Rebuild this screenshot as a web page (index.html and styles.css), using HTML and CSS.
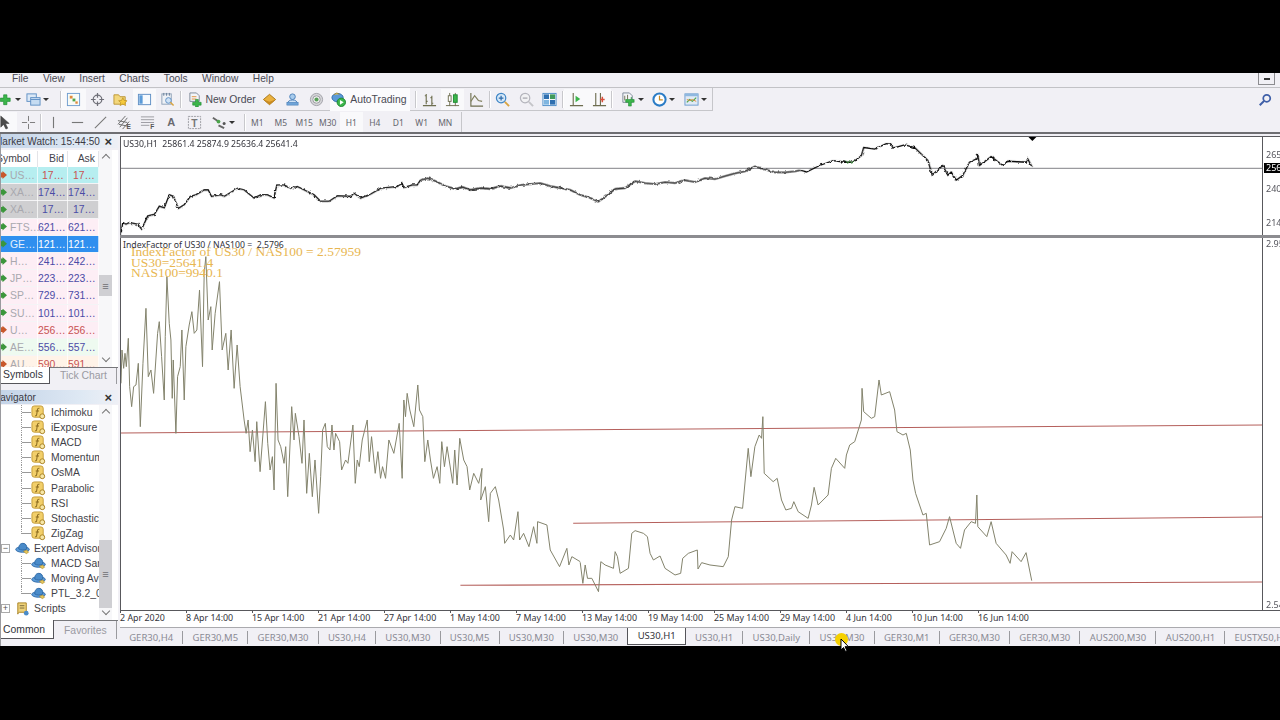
FILE: index.html
```html
<!DOCTYPE html>
<html lang="en">
<head>
<meta charset="utf-8">
<title>MetaTrader</title>
<link rel="stylesheet" href="styles.css">
</head>
<body>
<svg class="defs" width="0" height="0" aria-hidden="true">
  <filter id="jag-top" x="-2%" y="-10%" width="104%" height="120%">
    <feTurbulence type="fractalNoise" baseFrequency=".3" numOctaves="2" seed="9"/>
    <feDisplacementMap in="SourceGraphic" scale="3" xChannelSelector="R" yChannelSelector="G"/>
  </filter>
  <symbol id="i-f" viewBox="0 0 16 16">
    <rect x="1" y="1" width="12" height="12" rx="2.5" fill="#f2cf6a" stroke="#c39a36"/>
    <path d="M9 3.5C7.5 3 7 4 6.8 5.5L6 10.5C5.8 11.5 5 11.5 4.5 11.2M5 6.5h3.5" fill="none" stroke="#8a6a20" stroke-width="1.1"/>
    <circle cx="12" cy="12" r="2.6" fill="#f6e6a8" stroke="#a8801e"/>
  </symbol>
  <symbol id="i-hat" viewBox="0 0 16 16">
    <ellipse cx="8" cy="9" rx="7.2" ry="3" fill="#5b9bd8" stroke="#2f6aa8"/>
    <path d="M4 8.5C4 4 6 2.5 8.5 2.5S13 4.5 12.5 8.5C10 10 6.500 10 4 8.500Z" fill="#4a8bc9" stroke="#2f6aa8"/>
    <path d="M9 11l3 2.500 2.500-1.500-2-2.500Z" fill="#e6c65a" stroke="#a8801e" stroke-width=".6"/>
  </symbol>
  <symbol id="i-cross" viewBox="0 0 16 16">
    <circle cx="8" cy="8" r="4.600" fill="none" stroke="#6f6f78" stroke-width="1.300"/>
    <path d="M8 1v5M8 10v5M1 8h5M10 8h5" stroke="#6f6f78" stroke-width="1.300"/>
  </symbol>
  <symbol id="i-plus" viewBox="0 0 16 16">
    <path d="M6 3h3.500v3.500H13V10H9.500v3.500H6V10H2.500V6.500H6Z" fill="#3bb54a" stroke="#1f8a33" stroke-width=".7"/>
  </symbol>
</svg>

<div class="app">
  <nav class="menubar">
    <span class="menu-item">File</span>
    <span class="menu-item">View</span>
    <span class="menu-item">Insert</span>
    <span class="menu-item">Charts</span>
    <span class="menu-item">Tools</span>
    <span class="menu-item">Window</span>
    <span class="menu-item">Help</span>
    <span class="min-btn"><i></i></span>
  </nav>

  <div class="toolbar toolbar-main">
    <div class="tb-group">
      <span class="tb sm shift-in"><svg class="ico"><use href="#i-plus"/></svg></span><span class="caret"></span>
      <span class="tb sm ml2"><svg class="ico" viewBox="0 0 16 16"><rect x="1" y="2" width="10" height="8" fill="#dbe8f6" stroke="#5f8fc4"/><rect x="5" y="6" width="10" height="8" fill="#c6dcf2" stroke="#5f8fc4"/><path d="M5 8h10" stroke="#5f8fc4"/></svg></span><span class="caret"></span>
      <span class="sep ml10"></span>
      <span class="tb on"><svg class="ico" viewBox="0 0 16 16"><rect x="1.500" y="1.500" width="13" height="13" fill="#f8fbf6" stroke="#6e9ccf"/><rect x="4" y="4" width="3" height="3" fill="#e08a3c"/><rect x="7" y="7" width="3" height="3" fill="#4ca64c"/><rect x="10" y="10" width="2.500" height="2.500" fill="#e08a3c"/></svg></span>
      <span class="tb"><svg class="ico"><use href="#i-cross"/></svg></span>
      <span class="tb"><svg class="ico" viewBox="0 0 16 16"><path d="M1 3h5l1.500 2H13v8H1Z" fill="#f3d77c" stroke="#bd9638"/><path d="M10.500 6l1.400 3 3.100.3-2.300 2.100.7 3.100-2.900-1.700-2.900 1.700.7-3.100L6 9.300 9.100 9Z" fill="#f5c93c" stroke="#b98b1c" stroke-width=".7"/></svg></span>
      <span class="tb on"><svg class="ico" viewBox="0 0 16 16"><rect x="1.500" y="2.500" width="13" height="11" fill="#f6fafe" stroke="#5f8fc4"/><rect x="2.500" y="3.500" width="3.500" height="9" fill="#5b9bd8"/></svg></span>
      <span class="tb"><svg class="ico" viewBox="0 0 16 16"><rect x="2" y="2" width="10" height="11" fill="#eef1f6" stroke="#8fa1b8"/><path d="M4 1v3M7 1v3M10 1v3" stroke="#6a7f9a"/><circle cx="9" cy="9" r="3" fill="#cfe2f5" stroke="#5f8fc4"/><path d="M11 11l3.500 3.500" stroke="#d9a441" stroke-width="1.600"/></svg></span>
      <span class="sep"></span>
      <span class="tb tb-text"><svg class="ico" viewBox="0 0 16 16"><path d="M2 1h7l3 3v6H2Z" fill="#f3f5f8" stroke="#7d8797"/><path d="M4 5h5M4 7.500h5" stroke="#e0913c"/><path d="M8 8h3v3h3v3h-3v2H8v-2H5v-3h3Z" fill="#3bb54a" stroke="#1f8a33" stroke-width=".6"/></svg>New Order</span>
      <span class="tb"><svg class="ico" viewBox="0 0 16 16"><path d="M8 2.500l6.500 5.500L8 13.500 1.500 8Z" fill="#eab13f" stroke="#a8771c"/><path d="M1.500 8L8 13.500 14.500 8 8 10.500Z" fill="#c98a22"/></svg></span>
      <span class="tb"><svg class="ico" viewBox="0 0 16 16"><circle cx="8" cy="5" r="3" fill="#a8cbec" stroke="#4a7fb8"/><path d="M2.500 13c0-3 2.500-4.500 5.500-4.500s5.500 1.500 5.500 4.500Z" fill="#cfe2f5" stroke="#4a7fb8"/><rect x="2" y="11" width="12" height="3" fill="#6fa4d8" stroke="#4a7fb8" stroke-width=".6"/></svg></span>
      <span class="tb"><svg class="ico" viewBox="0 0 16 16"><circle cx="8" cy="8" r="6.500" fill="#d6d6da" stroke="#a0a0a8"/><circle cx="8" cy="8" r="4" fill="#eee" stroke="#9a9aa0"/><circle cx="8" cy="8" r="2.200" fill="#58a058"/></svg></span>
      <span class="tb tb-text tb-auto"><svg class="ico" viewBox="0 0 16 16"><ellipse cx="7" cy="6" rx="6" ry="4.500" fill="#5b9bd8" stroke="#2f6aa8"/><path d="M3 3l3-2 3 1.500" fill="#e6c65a" stroke="#a8801e" stroke-width=".7"/><circle cx="11" cy="11" r="4.500" fill="#3bb54a" stroke="#1f8a33"/><path d="M9.500 8.500l4 2.500-4 2.500Z" fill="#fff"/></svg>AutoTrading</span>
      <span class="sep ml5"></span>
      <span class="tb"><svg class="ico" viewBox="0 0 16 16"><path d="M4.500 2v11M3 4h1.500M4.500 10H6M10.500 4v10M9 6h1.500M10.500 12H12M1 14.500h14" fill="none" stroke="#6e6e50" stroke-width="1.200"/></svg></span>
      <span class="tb on"><svg class="ico" viewBox="0 0 16 16"><path d="M5 1v14M11 1v14" stroke="#6e6e50"/><rect x="3.500" y="4" width="3" height="6" fill="#fff" stroke="#6e6e50"/><rect x="9" y="3" width="4" height="8" fill="#3bb54a" stroke="#1f8a33"/><path d="M1 14.500h14" stroke="#6e6e50"/></svg></span>
      <span class="tb"><svg class="ico" viewBox="0 0 16 16"><path d="M2 1v14h13" fill="none" stroke="#6e6e50" stroke-width="1.200"/><path d="M2 10l4-6 4 5 4 1" fill="none" stroke="#80805f" stroke-width="1.200"/></svg></span>
      <span class="sep ml1"></span>
      <span class="tb"><svg class="ico" viewBox="0 0 16 16"><circle cx="6.500" cy="6.500" r="5" fill="#d6e8f8" stroke="#3f86c6" stroke-width="1.300"/><path d="M4 6.500h5M6.500 4v5" stroke="#2f6aa8" stroke-width="1.300"/><path d="M10.500 10.500l4.500 4.500" stroke="#d9a441" stroke-width="2"/></svg></span>
      <span class="tb"><svg class="ico" viewBox="0 0 16 16"><circle cx="6.500" cy="6.500" r="5" fill="#f2f2f4" stroke="#b4b4bc" stroke-width="1.300"/><path d="M4 6.500h5" stroke="#a4a4ac" stroke-width="1.300"/><path d="M10.500 10.500l4.500 4.500" stroke="#c4c4c8" stroke-width="2"/></svg></span>
      <span class="tb"><svg class="ico" viewBox="0 0 16 16"><rect x="1" y="1.500" width="14" height="13" fill="#fff" stroke="#4a8bc9"/><rect x="2" y="2.500" width="5.500" height="5" fill="#2f6fb0"/><rect x="8.500" y="2.500" width="5.500" height="5" fill="#3f9a5c"/><rect x="2" y="8.500" width="5.500" height="5" fill="#7fb5e0"/><rect x="8.500" y="8.500" width="5.500" height="5" fill="#2f6fb0"/></svg></span>
      <span class="sep ml1"></span>
      <span class="tb on"><svg class="ico" viewBox="0 0 16 16"><path d="M4.500 1v14M1 14.500h14" stroke="#6e6e50" stroke-width="1.200"/><path d="M7 4v7l5-3.500Z" fill="#3bb54a"/></svg></span>
      <span class="tb on"><svg class="ico" viewBox="0 0 16 16"><path d="M4 1v14M9 1v14M1 14.500h14" stroke="#6e6e50" stroke-width="1.200"/><path d="M11 5v6M8.500 8h5" stroke="#d8503c" stroke-width="1.600"/></svg></span>
      <span class="sep"></span>
      <span class="tb sm ml6"><svg class="ico" viewBox="0 0 16 16"><path d="M2 1h7l3 3v7H2Z" fill="#f3f5f8" stroke="#7d8797"/><path d="M4 4v5M7 3v5" stroke="#6e6e50"/><path d="M8 8h3V5.500h0V8h3v3h-3v4H8v-4H5V8Z" fill="#3bb54a" stroke="#1f8a33" stroke-width=".6"/></svg></span><span class="caret"></span>
      <span class="tb sm ml5"><svg class="ico" viewBox="0 0 16 16"><circle cx="8" cy="8" r="6.500" fill="#fff" stroke="#2b7cc6" stroke-width="2.200"/><path d="M8 4v4.500h3.500" fill="none" stroke="#c98a22" stroke-width="1.300"/></svg></span><span class="caret"></span>
      <span class="tb sm ml6"><svg class="ico" viewBox="0 0 16 16"><rect x="1" y="2" width="14" height="12" fill="#dfeaf6" stroke="#6e9ccf"/><rect x="1" y="2" width="14" height="2.500" fill="#8fb8e0"/><path d="M3 11l3-3 3 2 4-4" fill="none" stroke="#4ca64c" stroke-width="1.200"/><path d="M3 8l3 1 3-1 4 2" fill="none" stroke="#e08a3c"/></svg></span><span class="caret"></span>
    </div>
    <svg class="search" viewBox="0 0 16 16"><circle cx="10" cy="6" r="4" fill="none" stroke="#3f5fa8" stroke-width="2"/><path d="M7 9l-5 5" stroke="#3f5fa8" stroke-width="2.400"/></svg>
  </div>

  <div class="toolbar toolbar-draw">
    <div class="tb-group">
      <span class="tb on shift-out"><svg class="ico" viewBox="0 0 16 16"><path d="M4 1v12l3-3 2.500 5 2-1-2.500-5h4Z" fill="#4a4a4a" stroke="#333" stroke-width=".5"/></svg></span>
      <span class="tb"><svg class="ico" viewBox="0 0 16 16"><path d="M8 1v5.500M8 9.500V15M1 8h5.500M9.500 8H15" stroke="#777"/></svg></span>
      <span class="sep"></span>
      <span class="tb"><svg class="ico" viewBox="0 0 16 16"><path d="M8 2v12" stroke="#777" stroke-width="1.200"/></svg></span>
      <span class="tb"><svg class="ico" viewBox="0 0 16 16"><path d="M2 8h12" stroke="#777" stroke-width="1.200"/></svg></span>
      <span class="tb"><svg class="ico" viewBox="0 0 16 16"><path d="M2 14L14 2" stroke="#777" stroke-width="1.200"/></svg></span>
      <span class="tb"><svg class="ico" viewBox="0 0 16 16"><path d="M1 10L9 1M3 13l8-10M6 15l7-8M1 6l10 2M2 10l10 2" fill="none" stroke="#6a6a6a"/><text x="10" y="15" class="ico-letter">E</text></svg></span>
      <span class="tb"><svg class="ico" viewBox="0 0 16 16"><path d="M1 2h14M1 5h14M1 8h14M1 11h9" stroke="#9a9aa0"/><text x="11" y="15" class="ico-letter">F</text></svg></span>
      <span class="tb"><span class="glyph-a">A</span></span>
      <span class="tb"><svg class="ico" viewBox="0 0 16 16"><rect x="1.500" y="1.500" width="13" height="13" fill="none" stroke="#9a9aa0" stroke-dasharray="2 1"/><text x="4.500" y="12.500" class="ico-t">T</text></svg></span>
      <span class="tb sm ml3"><svg class="ico" viewBox="0 0 16 16"><path d="M2 3l6 4" stroke="#666" stroke-width="2"/><path d="M8 11l6 3" stroke="#666" stroke-width="2"/><circle cx="8" cy="7" r="2" fill="#4ca64c"/><circle cx="14" cy="9" r="1.600" fill="#555"/></svg></span><span class="caret"></span>
      <span class="sep ml8"></span>
      <span class="tb period">M1</span>
      <span class="tb period">M5</span>
      <span class="tb period">M15</span>
      <span class="tb period">M30</span>
      <span class="tb period on">H1</span>
      <span class="tb period">H4</span>
      <span class="tb period">D1</span>
      <span class="tb period">W1</span>
      <span class="tb period">MN</span>
    </div>
  </div>

  <main class="workspace">
    <aside class="side">
      <section class="panel market">
        <header class="panel-title"><span class="panel-name">Market Watch: 15:44:50</span><span class="close">×</span></header>
        <div class="panel-body">
          <div class="mw-table">
            <div class="mw-head"><span>Symbol</span><span>Bid</span><span>Ask</span></div>
            <div class="mw-row cyan red"><span class="sym">US…</span><span>17…</span><span>17…</span></div>
            <div class="mw-row grey"><span class="sym">XA…</span><span>174…</span><span>174…</span></div>
            <div class="mw-row grey"><span class="sym">XA…</span><span>17…</span><span>17…</span></div>
            <div class="mw-row pink"><span class="sym">FTS…</span><span>621…</span><span>621…</span></div>
            <div class="mw-row selected"><span class="sym">GE…</span><span>121…</span><span>121…</span></div>
            <div class="mw-row pink"><span class="sym">H…</span><span>241…</span><span>242…</span></div>
            <div class="mw-row pink"><span class="sym">JP…</span><span>223…</span><span>223…</span></div>
            <div class="mw-row pink"><span class="sym">SP…</span><span>729…</span><span>731…</span></div>
            <div class="mw-row pink"><span class="sym">SU…</span><span>101…</span><span>101…</span></div>
            <div class="mw-row pink red"><span class="sym">U…</span><span>256…</span><span>256…</span></div>
            <div class="mw-row mint"><span class="sym">AE…</span><span>556…</span><span>557…</span></div>
            <div class="mw-row peach red"><span class="sym">AU…</span><span>590…</span><span>591…</span></div>
          </div>
          <div class="scrollbar"><span class="sb-arrow up"></span><span class="thumb thumb-mw">≡</span><span class="sb-arrow down"></span></div>
        </div>
        <div class="panel-tabs"><span class="ptab active">Symbols</span><span class="ptab">Tick Chart</span></div>
      </section>

      <section class="panel navigator">
        <header class="panel-title"><span class="panel-name">Navigator</span><span class="close">×</span></header>
        <div class="panel-body">
          <div class="tree">
            <div class="node leaf"><svg class="ico"><use href="#i-f"/></svg>Ichimoku</div>
            <div class="node leaf"><svg class="ico"><use href="#i-f"/></svg>iExposure</div>
            <div class="node leaf"><svg class="ico"><use href="#i-f"/></svg>MACD</div>
            <div class="node leaf"><svg class="ico"><use href="#i-f"/></svg>Momentum</div>
            <div class="node leaf"><svg class="ico"><use href="#i-f"/></svg>OsMA</div>
            <div class="node leaf"><svg class="ico"><use href="#i-f"/></svg>Parabolic</div>
            <div class="node leaf"><svg class="ico"><use href="#i-f"/></svg>RSI</div>
            <div class="node leaf"><svg class="ico"><use href="#i-f"/></svg>Stochastic</div>
            <div class="node leaf last"><svg class="ico"><use href="#i-f"/></svg>ZigZag</div>
            <div class="node root"><span class="expander">−</span><svg class="ico"><use href="#i-hat"/></svg>Expert Advisors</div>
            <div class="node leaf"><svg class="ico"><use href="#i-hat"/></svg>MACD Sample</div>
            <div class="node leaf"><svg class="ico"><use href="#i-hat"/></svg>Moving Average</div>
            <div class="node leaf last"><svg class="ico"><use href="#i-hat"/></svg>PTL_3.2_03</div>
            <div class="node root"><span class="expander">+</span><svg class="ico" viewBox="0 0 16 16"><path d="M3 2h9v10H5c-1 0-2 1-2 2Z" fill="#eed27a" stroke="#a8801e"/><path d="M5 5h5M5 7.500h5" stroke="#7a6a3a"/><circle cx="12" cy="13" r="2.500" fill="#4a8bc9"/></svg>Scripts</div>
          </div>
          <div class="scrollbar"><span class="sb-arrow up"></span><span class="thumb thumb-nav">≡</span><span class="sb-arrow down"></span></div>
        </div>
        <div class="panel-tabs"><span class="ptab active">Common</span><span class="ptab">Favorites</span></div>
      </section>
    </aside>

    <section class="charts">
      <div class="pane pane-top">
        <div class="plot">
          <span class="legend">US30,H1  25861.4 25874.9 25636.4 25641.4</span>
          <svg class="plot-svg" viewBox="120 136 1143 100" preserveAspectRatio="none">
            <path class="hline" d="M120 168H1263"/>
            <g class="price-line">
              <polyline transform="translate(120 135) scale(.33333)" points="0,300 5,265 15,270 25,265 50,270 62,285 80,245 100,240 115,215 130,220 145,180 158,185 172,222 190,210 208,185 225,180 250,165 262,165 272,185 300,180 310,185 350,160 370,165 400,190 420,180 440,180 460,190 468,150 490,150 510,160 530,155 550,165 580,180 600,200 625,200 650,183 690,185 700,175 720,190 750,178 780,160 830,155 845,145 850,158 875,150 890,150 900,135"/>
              <polyline points="420,180 428,178 435,181 445,186 455,189 462,187 470,190 480,188 490,189 500,186 510,188 520,185 530,184 540,183 550,186 560,188 570,190 580,195 590,198 598,202 605,197 615,189 625,188 635,181 645,183 655,184 665,182 675,183 685,180 695,182 705,178 715,179 725,176 735,173 745,171 755,166 765,169 775,172 785,172 795,171 800,170"/>
              <polyline transform="translate(800 130) scale(.33333)" points="0,120 20,125 60,105 100,90 135,95 160,95 185,75 192,50 225,55 260,38 275,40 280,52 315,42 345,50 385,90 398,135 415,118 430,105 445,135 455,125 470,150 490,135 510,95 530,85 535,70 540,105 575,78 610,105 625,92 680,95 685,85 698,110"/>
            </g>
            <path class="mark" d="M846 160l2 3 2-3 2 3 2-3"/>
            <path d="M1029 136h8l-4 4Z"/>
          </svg>
        </div>
        <div class="price-axis">
          <span class="price p265">265</span>
          <span class="price now p256">256</span>
          <span class="price p240">240</span>
          <span class="price p214">214</span>
        </div>
      </div>

      <div class="pane pane-bottom">
        <div class="plot">
          <div class="indicator">
            <span class="legend-small">IndexFactor of US30 / NAS100 =  2.5796</span>
            <div class="gold">IndexFactor of US30 / NAS100 = 2.57959<br>US30=25641.4<br>NAS100=9940.1</div>
          </div>
          <svg class="plot-svg" viewBox="120 238 1143 372" preserveAspectRatio="none">
            <g class="levels">
              <path d="M120 433L1263 425"/>
              <path d="M573 523.300L1263 517"/>
              <path d="M460 585.300L1263 582"/>
            </g>
            <g class="ratio-line">
              <polyline transform="translate(120 270) scale(.33333)" points="0,340 3,240 8,295 12,250 16,290 22,205 26,350 32,410 38,350 45,345 52,280 58,470 66,280 75,115 82,320 90,300 98,370 110,190 115,155 122,260 130,390 133,200 138,20 145,160 150,210 154,385 157,270 165,490 170,320 178,290 183,180 190,390 195,230 205,165 213,125 220,190 228,180 236,60 245,290 250,10 255,-40 262,150 270,110 274,240 283,130 296,35 304,240 315,190 322,300 331,180 340,355 349,225 358,350 370,450 376,490 382,450 388,545 395,480 403,575 408,455 418,605 434,395 441,520 448,600 455,560 460,660 466,340 472,510 480,530 490,580 495,530 501,680 513,410 520,510 524,430 535,500 544,580 550,450 558,670 566,550 575,680 583,570 594,730 600,620 606,480 614,460 620,530 628,540 634,465 640,540 645,490 657,515 663,600 675,570 682,580 697,465 704,640 710,570 716,590 725,510 740,450 746,575 753,500 764,610 772,545 780,625 786,590 795,625 805,510 820,550 836,460 845,625 850,390 855,440 860,370 868,420 880,470 892,345 897,420 907,440 913,575 922,510 930,570 939,625 950,590 958,640 964,515 972,590 980,530 997,640 1003,540 1010,645 1018,505 1030,570 1040,590 1048,660 1060,610 1075,640 1085,595 1081,690 1095,650 1105,755 1110,670 1125,650 1135,690 1150,780 1153,820 1170,795 1180,810 1193,725 1198,810 1210,790 1226,830 1240,770 1250,820 1252,755 1280,765 1290,840 1318,890 1340,835 1346,885 1355,860 1380,875"/>
              <polyline transform="translate(560 370) scale(.33333)" points="60,577 68,640 75,585 82,625 95,625 115,665 122,575 135,585 160,595 165,545 172,560 180,610 205,595 215,490 225,482 250,490 262,500 270,550 280,570 300,558 315,595 345,615 362,610 368,565 385,550 412,540 414,597 425,578 450,585 490,590 505,560 515,450 525,410 548,415 565,235 573,320 585,230 598,195 605,205 609,140 613,310 640,335 652,325 665,390 678,420 695,415 702,395 715,425 745,445 755,405 763,352 775,405 805,375 815,295 828,265 855,295 860,255 870,225 885,215 905,150 907,55 912,125 935,145 945,140 958,30 965,75 990,65 1005,120 1012,185 1030,195 1040,190 1052,240 1060,330 1068,370 1090,435 1100,430 1110,525 1140,515 1160,475 1170,440 1190,520 1203,535 1215,480 1235,455 1248,460 1252,375 1255,470 1282,500 1295,455 1310,520 1340,555 1352,580 1358,545 1385,575 1400,548 1417,632"/>
            </g>
          </svg>
        </div>
        <div class="price-axis">
          <span class="price p295">2.95</span>
          <span class="price p254">2.54</span>
        </div>
      </div>

      <div class="time-axis">
        <span>2 Apr 2020</span><span>8 Apr 14:00</span><span>15 Apr 14:00</span><span>21 Apr 14:00</span><span>27 Apr 14:00</span><span>1 May 14:00</span><span>7 May 14:00</span><span>13 May 14:00</span><span>19 May 14:00</span><span>25 May 14:00</span><span>29 May 14:00</span><span>4 Jun 14:00</span><span>10 Jun 14:00</span><span>16 Jun 14:00</span>
      </div>

      <div class="chart-tabs">
        <span class="ctab">GER30,H4</span>
        <span class="ctab">GER30,M5</span>
        <span class="ctab">GER30,M30</span>
        <span class="ctab">US30,H4</span>
        <span class="ctab">US30,M30</span>
        <span class="ctab">US30,M5</span>
        <span class="ctab">US30,M30</span>
        <span class="ctab">US30,M30</span>
        <span class="ctab active">US30,H1</span>
        <span class="ctab">US30,H1</span>
        <span class="ctab">US30,Daily</span>
        <span class="ctab">US30,M30</span>
        <span class="ctab">GER30,M1</span>
        <span class="ctab">GER30,M30</span>
        <span class="ctab">GER30,M30</span>
        <span class="ctab">AUS200,M30</span>
        <span class="ctab">AUS200,H1</span>
        <span class="ctab">EUSTX50,H1</span>
      </div>
    </section>
  </main>
</div>

<div class="cursor">
  <svg viewBox="0 0 14 18" class="cursor-arrow"><path d="M4 3v11l2.500-2.500 2 4 1.500-.8-2-4h3.500Z" fill="#fff" stroke="#000"/></svg>
</div>
</body>
</html>
```

FILE: styles.css
```css
* { box-sizing: border-box; }

html, body {
  margin: 0;
  height: 720px;
  overflow: hidden;
  background: #000;
}

body {
  padding-top: 73px;
  font-family: "Liberation Sans", Arial, sans-serif;
  font-size: 10.400px;
  color: #3c3c44;
}

.defs { position: absolute; }

.app {
  height: 573px;
  display: flex;
  flex-direction: column;
  background: #f1f0f5;
  overflow: hidden;
  filter: blur(.35px);
}

/* menu */
.menubar {
  height: 14px;
  flex: none;
  display: flex;
  align-items: flex-start;
  gap: 14.500px;
  padding-left: 12px;
  font-size: 10.200px;
  line-height: 11px;
  color: #4a4a54;
}

.min-btn {
  margin-left: auto;
  margin-right: 5px;
  width: 17px;
  height: 12px;
  border: 1px solid #8c8c90;
  border-top: 0;
  display: flex;
  align-items: center;
  justify-content: center;
}

.min-btn i {
  width: 6px;
  height: 2px;
  background: #333;
}

/* toolbars */
.toolbar {
  flex: none;
  display: flex;
  align-items: center;
  overflow: hidden;
}

.toolbar-main {
  height: 24px;
  border-top: 1px solid #c2c2c6;
}

.toolbar-draw {
  height: 23px;
  padding-top: 1px;
  border-bottom: 2px solid #6e6e72;
}

.tb-group {
  display: flex;
  align-items: center;
  height: 100%;
  flex: none;
  border-right: 1px solid #c6c6ca;
  border-bottom: 1px solid #c6c6ca;
  padding-right: 4px;
}

.toolbar-draw .tb-group { border-bottom: 0; }

.tb {
  flex: none;
  width: 23.500px;
  height: 21px;
  display: flex;
  align-items: center;
  justify-content: center;
}

.tb.on { background: #f9f9fb; }
.tb.sm { width: 18px; }
.shift-in { margin-left: -4px; }
.shift-out { margin-left: -7px; }
.ml1 { margin-left: 1px; }
.ml2 { margin-left: 2px; }
.ml3 { margin-left: 3px; }
.ml4 { margin-left: 4px; }
.ml5 { margin-left: 5px; }
.ml6 { margin-left: 6px; }
.ml8 { margin-left: 8px; }
.ml10 { margin-left: 10px; }

.tb-text {
  width: auto;
  gap: 3px;
  padding: 0 2px 0 6px;
  color: #4a4a54;
  white-space: nowrap;
}

.tb-auto {
  margin-left: 2px;
  padding: 0 4px 0 1px;
  gap: 4px;
  background: #fbfbfd;
  height: 23px;
}

.ico { width: 15px; height: 15px; flex: none; }

.ico-letter {
  font: 700 7px "Liberation Sans", sans-serif;
  fill: #555;
}

.ico-t {
  font: 700 11px "Liberation Sans", sans-serif;
  fill: #777;
}

.glyph-a {
  font: 700 11px "Liberation Sans", sans-serif;
  color: #6a6a70;
}

.caret {
  flex: none;
  width: 8px;
  height: 3px;
  position: relative;
}

.caret::after {
  content: "";
  position: absolute;
  left: 1px;
  top: 0;
  border: 3px solid transparent;
  border-top: 3px solid #333;
  border-bottom: 0;
}

.sep {
  flex: none;
  width: 2px;
  height: 17px;
  background: #c8c8cc;
  border-right: 1px solid #fff;
}

.period {
  font-family: "Noto Sans", sans-serif;
  font-size: 8.500px;
  color: #66666e;
}

.search {
  width: 14px;
  height: 14px;
  margin-left: auto;
  margin-right: 8px;
}

/* workspace */
.workspace {
  flex: 1;
  min-height: 0;
  display: flex;
}

.side {
  flex: none;
  width: 118px;
  display: flex;
  flex-direction: column;
  gap: 6px;
  border-left: 1px solid #9a9a9e;
}

.panel {
  display: flex;
  flex-direction: column;
  overflow: hidden;
}

.market { height: 250px; }
.navigator { height: 252px; }

.panel-title {
  height: 14px;
  flex: none;
  display: flex;
  align-items: center;
  justify-content: space-between;
  background: linear-gradient(90deg, #c4d4e8, #dfe9f4 70%, #eef0f6);
  padding-right: 6px;
  overflow: hidden;
  font-size: 10px;
  color: #3a3a44;
  white-space: nowrap;
}

.panel-name { margin-left: -7px; }

.navigator .panel-name { margin-left: -8px; }

.close {
  font-size: 13px;
  line-height: 1;
  font-weight: 700;
  color: #333;
}

.panel-body {
  flex: 1;
  min-height: 0;
  display: flex;
  background: #fff;
  margin-top: 1px;
  position: relative;
}

.market .panel-body { margin-top: 2px; }

.scrollbar {
  flex: none;
  width: 13px;
  margin-right: 6px;
  background: #f7f7f9;
  display: flex;
  flex-direction: column;
  align-items: stretch;
  position: relative;
}

.sb-arrow {
  flex: none;
  height: 14px;
  position: relative;
}

.sb-arrow::after {
  content: "";
  position: absolute;
  left: 3.500px;
  width: 5px;
  height: 5px;
  border-left: 1px solid #777;
  border-top: 1px solid #777;
}

.sb-arrow.up::after { top: 5px; transform: rotate(45deg); }
.sb-arrow.down { margin-top: auto; }
.sb-arrow.down::after { top: 2px; transform: rotate(225deg); }

.thumb {
  position: absolute;
  left: 0;
  right: 0;
  background: #cfcfd3;
  color: #6e6e72;
  font-size: 11px;
  display: flex;
  align-items: center;
  justify-content: center;
}

.thumb-mw { top: 125px; height: 21px; }
.thumb-nav { top: 135px; height: 68px; }

/* market watch */
.mw-table {
  flex: 1;
  min-width: 0;
  overflow: hidden;
}

.mw-head,
.mw-row {
  display: grid;
  grid-template-columns: 37px 30px 31px;
}

.mw-head {
  height: 17px;
  align-items: center;
  background: #fff;
  color: #44444c;
}

.mw-head span { text-align: right; padding-right: 3px; border-right: 1px solid #e4e4e8; line-height: 16px; }
.mw-head span:first-child { text-align: left; padding: 0; margin-left: -5px; }

.mw-row {
  height: 17.200px;
  line-height: 17px;
  color: #4b4ba6;
  border-bottom: 1px solid #f4f4f6;
  position: relative;
}

.mw-row span { text-align: right; padding-right: 3px; border-right: 1px solid rgba(255,255,255,.7); }

.mw-row .sym {
  text-align: left;
  padding: 0 0 0 9px;
  color: #a8a8ae;
}

.mw-row::before {
  content: "";
  position: absolute;
  left: -3px;
  top: 4px;
  width: 9px;
  height: 8px;
  background: #3c963c;
  clip-path: polygon(0 20%, 50% 20%, 50% 0, 100% 50%, 50% 100%, 50% 80%, 0 80%);
}

.mw-row.red::before { background: #c8582c; }
.mw-row.red { color: #c85252; }
.cyan { background: #b6eef0; }
.grey { background: #cfcfd1; }
.pink { background: #fdeef5; }
.mint { background: #eefaf0; }
.peach { background: #fff3e8; }
.mw-row.selected { background: #2f8fef; color: #fff; }
.mw-row.selected .sym { color: #e4f0fc; }

/* panel tabs */
.panel-tabs {
  flex: none;
  height: 17px;
  display: flex;
  align-items: flex-start;
  background: #f1f0f5;
  border-top: 1px solid #77777b;
  white-space: nowrap;
}

.navigator .panel-tabs { height: 22px; }

.ptab {
  height: 16px;
  line-height: 15px;
  padding: 0 9px 0 10px;
  color: #9a9aa2;
  border-right: 1px solid #9a9a9e;
}

.ptab.active {
  width: 49px;
  padding: 0 0 0 2px;
  background: #fff;
  color: #33333a;
  border-right: 1px solid #55555a;
  border-bottom: 1px solid #55555a;
  margin-top: -1px;
  height: 17px;
}

.navigator .ptab.active { width: 53px; height: 19px; line-height: 19px; }
.navigator .ptab { line-height: 19px; height: 18px; }

/* navigator tree */
.tree {
  flex: 1;
  min-width: 0;
  overflow: hidden;
  color: #3f3f48;
}

.node {
  height: 15.100px;
  display: flex;
  align-items: center;
  gap: 5px;
  white-space: nowrap;
  position: relative;
}

.leaf { padding-left: 30px; }
.root { padding-left: 14px; gap: 4px; }

.leaf::before {
  content: "";
  position: absolute;
  left: 20px;
  top: 0;
  bottom: 0;
  width: 9px;
  border-left: 1px dotted #999;
  background: linear-gradient(#999, #999) 0 50% / 100% 1px no-repeat;
}

.leaf.last::before { bottom: 7px; background-position: 0 100%; }

.expander {
  position: absolute;
  left: 0;
  top: 3px;
  width: 9px;
  height: 9px;
  line-height: 7px;
  text-align: center;
  font-size: 9px;
  border: 1px solid #aaa;
  background: #fff;
  color: #555;
}

/* charts */
.charts {
  flex: 1;
  min-width: 0;
  margin-left: 2px;
  padding-top: 2px;
  display: flex;
  flex-direction: column;
}

.pane {
  display: flex;
  flex: none;
  background: #fff;
}

.pane-top { height: 102px; border-top: 1px solid #5a5a5e; border-bottom: 3px solid #8c8c90; }
.pane-bottom { height: 372px; }

.plot {
  width: 1143px;
  flex: none;
  position: relative;
  border-left: 1px solid #58585c;
  border-right: 1px solid #58585c;
  overflow: hidden;
}

.plot-svg {
  display: block;
  width: 100%;
  height: 100%;
}

.legend,
.legend-small {
  position: absolute;
  left: 2px;
  font-family: "Noto Sans", sans-serif;
  font-size: 8.700px;
  color: #33333a;
  white-space: pre;
  z-index: 1;
}

.legend { top: 1px; }
.legend-small { top: 1px; }

.indicator {
  position: absolute;
  inset: 0;
}

.gold {
  position: absolute;
  left: 10px;
  top: 9px;
  font: 13.500px/10.500px "Liberation Serif", serif;
  color: #e8b651;
  white-space: nowrap;
  z-index: 1;
}

.hline { stroke: #9a9a9e; stroke-width: 1.500; fill: none; }

.price-line {
  filter: url(#jag-top);
}

.price-line polyline {
  fill: none;
  stroke: #000;
  stroke-width: 1.300px;
  vector-effect: non-scaling-stroke;
}

.mark { fill: none; stroke: #3a8a3a; }

.levels path { stroke: #b5605c; stroke-width: 1.100; fill: none; }

.ratio-line polyline {
  fill: none;
  stroke: #83836c;
  stroke-width: 1px;
  vector-effect: non-scaling-stroke;
}

.price-axis {
  flex: 1;
  position: relative;
  overflow: hidden;
  background: #fff;
}

.price {
  position: absolute;
  left: 3px;
  font-family: "Noto Sans", sans-serif;
  font-size: 9px;
  line-height: 10px;
  color: #55555c;
}

.now { left: 1px; right: 0; padding-left: 2px; background: #000; color: #fff; }
.p265 { top: 13px; }
.p256 { top: 26px; }
.p240 { top: 47px; }
.p214 { top: 81px; }
.p295 { top: 1px; }
.p254 { top: 362px; }

.time-axis {
  flex: none;
  height: 17px;
  display: flex;
  background: #fff;
  border-top: 1px solid #58585c;
  font-family: "Noto Sans", sans-serif;
  font-size: 8.900px;
  line-height: 14px;
  color: #33333a;
  white-space: nowrap;
}

.time-axis span {
  flex: none;
  width: 66px;
  position: relative;
}

.time-axis span::before {
  content: "";
  position: absolute;
  left: 0;
  top: 0;
  width: 1px;
  height: 2px;
  background: #58585c;
}

.chart-tabs {
  flex: 1;
  min-height: 0;
  display: flex;
  overflow: hidden;
  border-top: 1px solid #aaaaae;
  font-family: "Noto Sans", sans-serif;
  font-size: 9.500px;
  white-space: nowrap;
}

.ctab {
  flex: none;
  height: 13px;
  margin-top: 3px;
  padding: 0 9.200px;
  line-height: 13px;
  color: #8a8a94;
  border-right: 1px solid #9a9a9e;
}

.ctab.active {
  height: 18px;
  margin-top: -1px;
  margin-left: -1px;
  line-height: 18px;
  background: #fff;
  color: #33333a;
  border: 1px solid #55555a;
  border-top: 0;
}

/* cursor overlay */
.cursor {
  position: absolute;
  left: 835px;
  top: 633px;
  width: 13px;
  height: 13px;
  border-radius: 50%;
  background: #f5d000;
}

.cursor-arrow {
  position: absolute;
  left: 2px;
  top: 3px;
  width: 14px;
  height: 18px;
  overflow: visible;
}
```
